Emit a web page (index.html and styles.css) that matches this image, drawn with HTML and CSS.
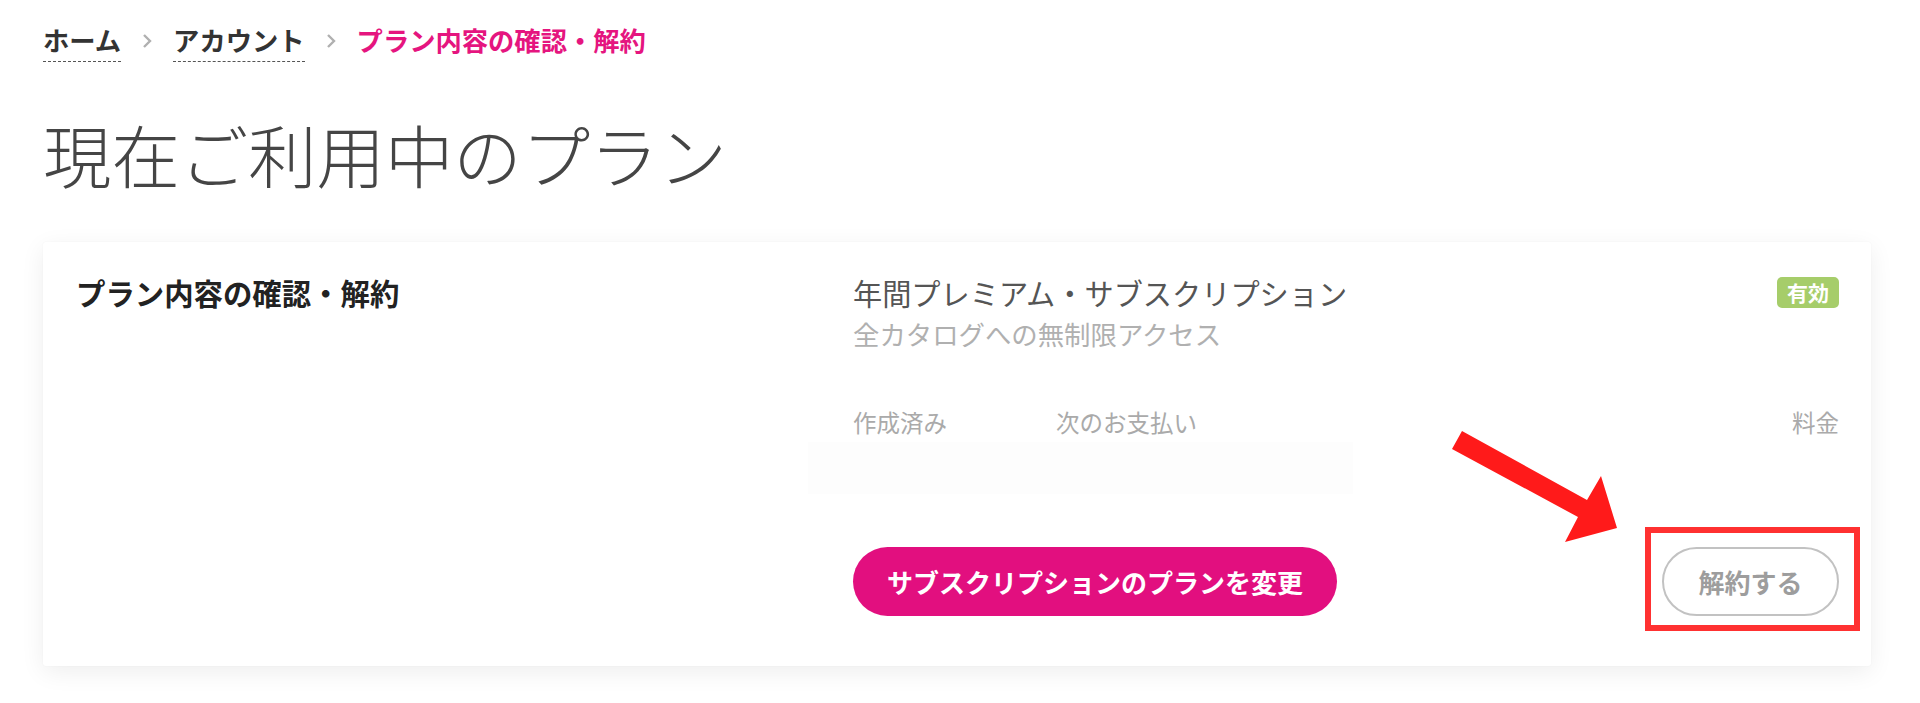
FILE: index.html
```html
<!DOCTYPE html>
<html lang="ja">
<head>
<meta charset="utf-8">
<title>現在ご利用中のプラン</title>
<link rel="stylesheet" href="styles.css">
</head>
<body>
<div class="page">
  <nav class="crumbs">
    <a class="crumb-link" href="#">ホーム</a>
    <svg class="sep" viewBox="0 0 10 16" width="10" height="16"><path d="M2 2 L8 8 L2 14" fill="none" stroke="#b0b0b0" stroke-width="2.4"/></svg>
    <a class="crumb-link" href="#">アカウント</a>
    <svg class="sep" viewBox="0 0 10 16" width="10" height="16"><path d="M2 2 L8 8 L2 14" fill="none" stroke="#b0b0b0" stroke-width="2.4"/></svg>
    <span class="crumb-current">プラン内容の確認・解約</span>
  </nav>

  <h1 class="title">現在ご利用中のプラン</h1>

  <section class="card">
    <div class="card-side">
      <h2 class="card-heading">プラン内容の確認・解約</h2>
    </div>
    <div class="card-main">
      <div class="plan-head">
        <div class="plan-name">年間プレミアム・サブスクリプション</div>
        <span class="badge">有効</span>
      </div>
      <div class="plan-desc">全カタログへの無制限アクセス</div>
      <div class="labels">
        <span class="label label-created">作成済み</span>
        <span class="label">次のお支払い</span>
        <span class="label label-price">料金</span>
      </div>
      <div class="empty-row"></div>
      <div class="actions">
        <button class="btn-primary" type="button">サブスクリプションのプランを変更</button>
        <button class="btn-cancel" type="button">解約する</button>
      </div>
    </div>
  </section>
</div>

<div class="annot-box"></div>
<svg class="annot-arrow" width="1920" height="703" viewBox="0 0 1920 703">
  <polygon points="1462,431 1587,500 1601,476 1617,528 1565,542 1578,517 1452,449" fill="#ff1a1a"/>
</svg>
</body>
</html>
```

FILE: styles.css
```css
html, body {
  margin: 0;
  padding: 0;
  background: #ffffff;
}

body {
  font-family: "Noto Sans CJK JP", "Noto Sans", sans-serif;
  color: #333;
  width: 1920px;
  height: 703px;
  overflow: hidden;
  position: relative;
}

.page {
  padding: 22px 49px 0 43px;
}

.crumbs {
  display: flex;
  align-items: flex-start;
  font-size: 26.3px;
  font-weight: 700;
  line-height: 36px;
}

.crumb-link {
  color: #333;
  text-decoration: none;
  border-bottom: 1px dashed #555;
  padding-bottom: 3px;
}

.sep {
  margin: 11px 21px 0 21px;
  flex: none;
}

.crumb-current {
  color: #e5157f;
}

.title {
  margin: 51px 0 0 0;
  font-size: 68.4px;
  font-weight: 300;
  line-height: 82px;
  color: #454545;
  letter-spacing: 0;
}

.card {
  margin-top: 47px;
  background: #fff;
  border-radius: 3px;
  box-shadow: 0 6px 24px rgba(0, 0, 0, 0.07), 0 0 2px rgba(0, 0, 0, 0.04);
  display: flex;
  padding: 30px 32px 50px 33px;
}

.card-side {
  flex: 0 0 777px;
}

.card-heading {
  margin: 0;
  font-size: 29.4px;
  font-weight: 700;
  line-height: 40px;
  color: #222;
}

.card-main {
  flex: 1;
  min-width: 0;
}

.plan-head {
  display: flex;
  justify-content: space-between;
  align-items: center;
}

.plan-name {
  font-size: 29.2px;
  line-height: 40px;
  color: #555;
}

.badge {
  background: #a6cd6a;
  color: #fff;
  font-size: 21px;
  font-weight: 700;
  line-height: 31px;
  padding: 0 10px;
  border-radius: 5px;
}

.plan-desc {
  margin-top: 4px;
  font-size: 26.4px;
  line-height: 36px;
  color: #b0b0b0;
}

.labels {
  display: flex;
  margin-top: 54px;
  font-size: 23.5px;
  line-height: 32px;
  color: #aaa;
}

.label-created {
  width: 203px;
}

.label-price {
  margin-left: auto;
}

.empty-row {
  margin: 4px 0 0 -45px;
  width: 545px;
  height: 52px;
  background: #fdfdfd;
}

.actions {
  margin-top: 53px;
  display: flex;
  justify-content: space-between;
  align-items: center;
}

.btn-primary {
  font-family: inherit;
  font-size: 26px;
  font-weight: 700;
  color: #fff;
  background: #e20f7f;
  border: none;
  border-radius: 35px;
  height: 69px;
  padding: 0 34px;
  line-height: 69px;
}

.btn-cancel {
  font-family: inherit;
  font-size: 26px;
  font-weight: 700;
  color: #9d9d9d;
  background: #fff;
  border: 2px solid #c2c2c2;
  border-radius: 35px;
  height: 69px;
  width: 177px;
  padding: 0;
  line-height: 65px;
}

.annot-box {
  position: absolute;
  left: 1645px;
  top: 527px;
  width: 203px;
  height: 92px;
  border: 6px solid #ff3131;
}

.annot-arrow {
  position: absolute;
  left: 0;
  top: 0;
  pointer-events: none;
}
```
